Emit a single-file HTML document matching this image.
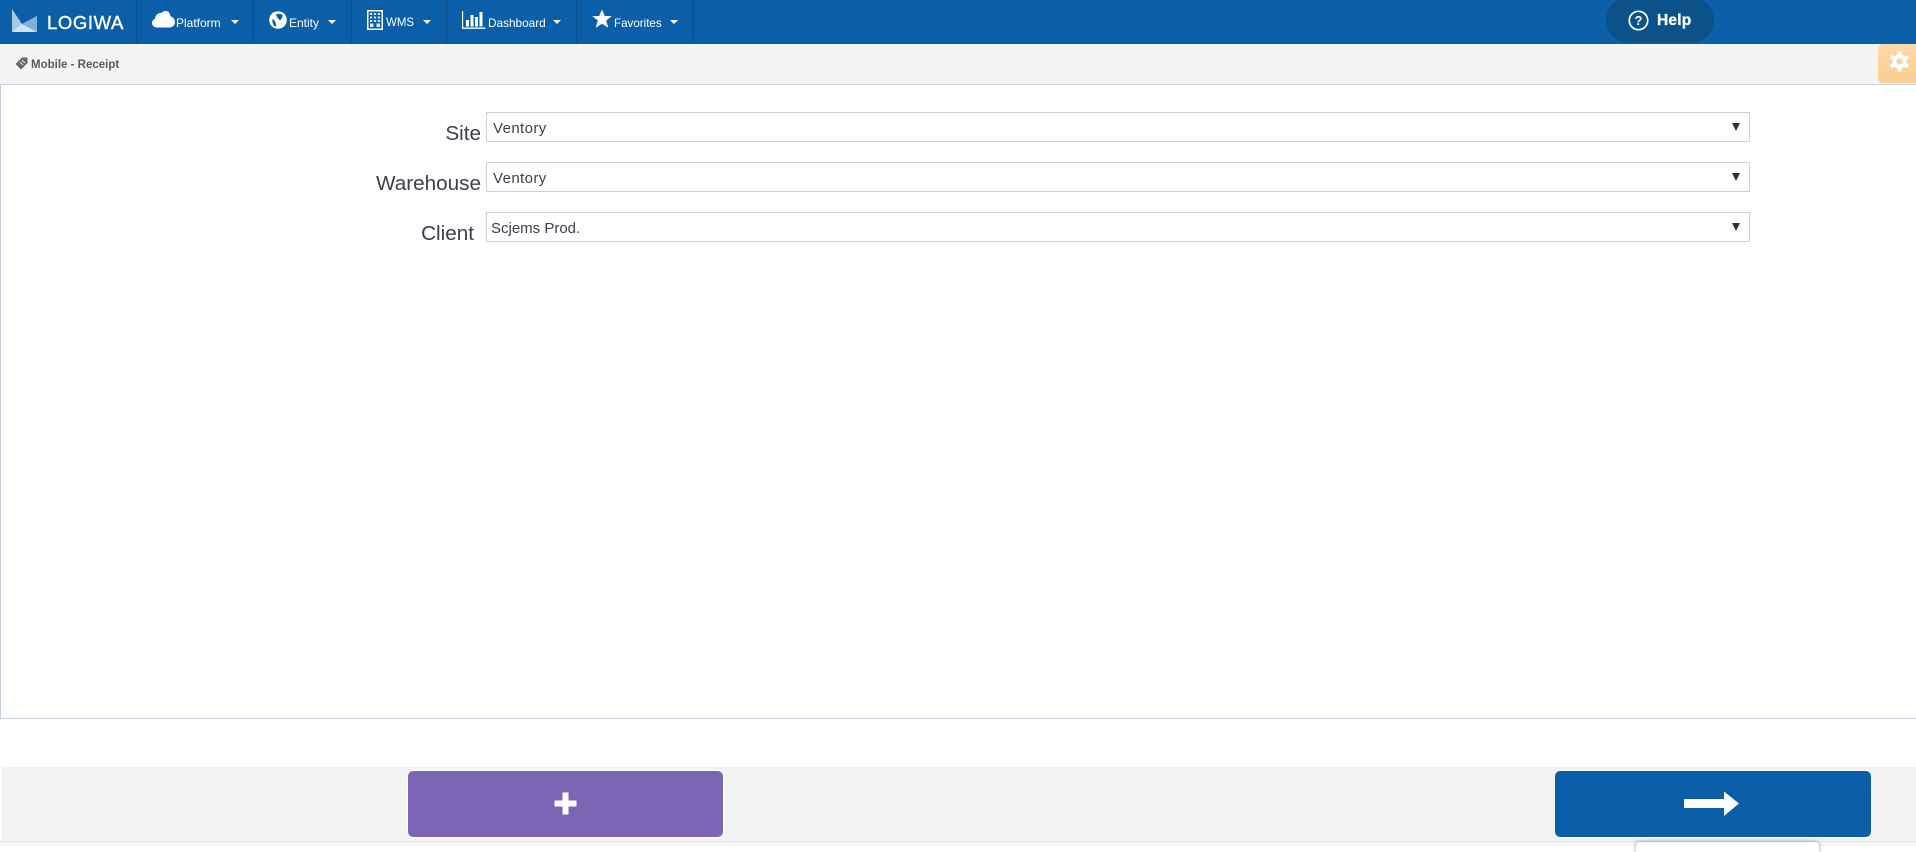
<!DOCTYPE html>
<html>
<head>
<meta charset="utf-8">
<title>Mobile - Receipt</title>
<style>
html,body{margin:0;padding:0;width:1916px;height:846px;overflow:hidden;background:#fff;font-family:"Liberation Sans",sans-serif;}
.abs,.abs *{box-sizing:border-box}
.abs{position:absolute}
#hdr{left:0;top:0;width:1916px;height:44px;background:#0b5fa8}
.div{top:0;width:1px;height:44px;background:#0a4f8a}
.nav{top:15px;font-size:12px;line-height:17px;color:#fff;white-space:nowrap}
.car{top:20px;width:0;height:0;border-left:4.5px solid transparent;border-right:4.5px solid transparent;border-top:4.5px solid #fff}
.lbl{font-size:20.7px;line-height:24px;color:#3b3f4e;white-space:nowrap;text-align:right}
.sel{left:486px;width:1264px;height:30px;border:1px solid #d0d0d0;background:#fff}
.val{font-size:15px;line-height:18px;color:#3a3f4c;white-space:nowrap}
.tri{left:1732px;width:0;height:0;border-left:4.5px solid transparent;border-right:4.5px solid transparent;border-top:8.5px solid #333}
</style>
</head>
<body>
<div class="abs" id="hdr"></div>
<svg class="abs" style="left:12px;top:9px" width="26" height="24" viewBox="0 0 26 24">
<path d="M0 0L10 15L25 7V23H0Z" fill="#a9cae6"/>
<path d="M0 23L10 15L25 23Z" fill="#cfe2f1"/>
<path d="M10 15L25 7V23Z" fill="#7fb0d9"/>
</svg>
<div class="abs" style="left:47px;top:12px;font-size:18.5px;line-height:22px;color:#fff;letter-spacing:.6px;-webkit-text-stroke:.4px #fff">LOGIWA</div>

<div class="abs div" style="left:136px"></div>
<div class="abs div" style="left:253px"></div>
<div class="abs div" style="left:351px"></div>
<div class="abs div" style="left:446px"></div>
<div class="abs div" style="left:576px"></div>
<div class="abs div" style="left:693px"></div>

<svg class="abs" style="left:152px;top:11px" width="23" height="17" viewBox="0 0 23 17"><path d="M5 16.500C2 16.500 0 14.500 0 12C0 10 1.200 8.300 3 7.700C3.200 4.500 6 1.800 9.500 1.800C11 0.700 12.500 0 13.800 0C16.500 0 18 2 18.300 5.200C20.800 5.700 23 8 23 11C23 14.300 20.500 16.500 17.500 16.500Z" fill="#fff"/></svg>
<div class="abs nav" style="left:176px">Platform</div>
<div class="abs car" style="left:231px"></div>

<svg class="abs" style="left:269px;top:11px" width="18" height="18" viewBox="0 0 18 18"><circle cx="9" cy="9" r="8.800" fill="#fff"/><path d="M7 3.500C9 2.500 12 2.800 13.500 4C13.800 6 12.500 8 11 9.500C9.500 8 7.500 6 7 3.500ZM3.500 8C5 8.500 6.500 10.500 7 13C7.500 14.500 7 15.500 6 15.500C4 14 3 11 3.500 8Z" fill="#0b5fa8"/></svg>
<div class="abs nav" style="left:289px">Entity</div>
<div class="abs car" style="left:328px"></div>

<svg class="abs" style="left:367px;top:10px" width="16" height="20" viewBox="0 0 16 20"><path d="M0 0H16V20H0Z" fill="#fff"/><rect x="1.500" y="1.500" width="13" height="17" fill="#0b5fa8"/><g fill="#dbe8f3"><rect x="3" y="3" width="2.200" height="2"/><rect x="6.900" y="3" width="2.200" height="2"/><rect x="10.800" y="3" width="2.200" height="2"/><rect x="3" y="6.500" width="2.200" height="2"/><rect x="6.900" y="6.500" width="2.200" height="2"/><rect x="10.800" y="6.500" width="2.200" height="2"/><rect x="3" y="10" width="2.200" height="2"/><rect x="6.900" y="10" width="2.200" height="2"/><rect x="10.800" y="10" width="2.200" height="2"/><rect x="3" y="13.500" width="3.500" height="3.500"/><rect x="9.500" y="13.500" width="3.500" height="3.500"/></g></svg>
<div class="abs nav" style="left:386px;font-size:11.500px">WMS</div>
<div class="abs car" style="left:423px"></div>

<svg class="abs" style="left:462px;top:11px" width="24" height="18" viewBox="0 0 24 18"><path d="M0.500 0V17.200H23.500" fill="none" stroke="#fff" stroke-width="1.300"/><g fill="#fff"><rect x="4" y="9" width="3" height="6.500"/><rect x="8.500" y="4" width="3" height="11.500"/><rect x="13" y="6" width="3" height="9.500"/><rect x="17.500" y="1" width="3" height="14.500"/></g></svg>
<div class="abs nav" style="left:488px;font-size:11.800px">Dashboard</div>
<div class="abs car" style="left:553px"></div>

<svg class="abs" style="left:592px;top:9px" width="20" height="20" viewBox="0 0 20 20"><path d="M10 0.500L12.800 7H19.800L14.200 11.500L16.300 18.800L10 14.700L3.700 18.800L5.800 11.500L0.200 7H7.200Z" fill="#fff"/></svg>
<div class="abs nav" style="left:614px;font-size:11.600px">Favorites</div>
<div class="abs car" style="left:670px"></div>

<div class="abs" style="left:1606px;top:-3px;width:108px;height:46px;border-radius:23px;background:#0a5289"></div>
<svg class="abs" style="left:1628px;top:10px" width="21" height="21" viewBox="0 0 21 21"><circle cx="10.500" cy="10.500" r="9.200" fill="none" stroke="#fff" stroke-width="1.700"/><text x="10.500" y="15" text-anchor="middle" font-family="Liberation Sans" font-size="13" font-weight="bold" fill="#fff">?</text></svg>
<div class="abs" style="left:1657px;top:11px;font-size:15.5px;line-height:19px;font-weight:bold;color:#fff;letter-spacing:.2px;-webkit-text-stroke:.3px #fff">Help</div>

<div class="abs" style="left:0;top:44px;width:1916px;height:41px;background:#f4f4f4;border-bottom:1px solid #ccd2da"></div>
<svg class="abs" style="left:15px;top:57px" width="13" height="13" viewBox="0 0 13 13"><path d="M0.500 7L7 0.500H12.500L12.500 6L6 12.500Z" fill="#666"/><path d="M5 5L8 8M7 3L10 6" stroke="#f4f4f4" stroke-width="1"/></svg>
<div class="abs" style="left:31px;top:58px;font-size:11.500px;line-height:14px;font-weight:bold;color:#555a64">Mobile - Receipt</div>
<div class="abs" style="left:1878px;top:44px;width:38px;height:39px;border-radius:5px 0 0 5px;background:linear-gradient(#fcdaa8,#fbcd90)"></div>
<svg class="abs" style="left:1889px;top:51px" width="21" height="21" viewBox="0 0 21 21"><circle cx="10.500" cy="10.500" r="5.200" fill="none" stroke="#fff" stroke-width="4"/><g stroke="#fff" stroke-width="4"><path d="M10.500 0.500V4"/><path d="M10.500 17V20.500"/><path d="M1.800 5.500L4.800 7.200"/><path d="M16.200 13.800L19.200 15.500"/><path d="M1.800 15.500L4.800 13.800"/><path d="M16.200 7.200L19.200 5.500"/></g></svg>

<div class="abs" style="left:0;top:85px;width:1916px;height:634px;background:#fff;border-left:1px solid #c5d0e0;border-bottom:1px solid #c5d0e0"></div>

<div class="abs lbl" style="left:300px;width:181px;top:122px">Site</div>
<div class="abs lbl" style="left:300px;width:181px;top:172px">Warehouse</div>
<div class="abs lbl" style="left:300px;width:174px;top:222px">Client</div>

<div class="abs sel" style="top:112px"></div>
<div class="abs sel" style="top:162px"></div>
<div class="abs sel" style="top:212px"></div>
<div class="abs val" style="left:493px;top:119.500px;letter-spacing:.4px">Ventory</div>
<div class="abs val" style="left:493px;top:169.500px;letter-spacing:.4px">Ventory</div>
<div class="abs val" style="left:491px;top:219.500px">Scjems Prod.</div>
<div class="abs tri" style="top:123px"></div>
<div class="abs tri" style="top:173px"></div>
<div class="abs tri" style="top:223px"></div>

<div class="abs" style="left:0;top:841px;width:1916px;height:5px;background:#f7f7f7;border-top:1px solid #e4e4e4"></div>
<div class="abs" style="left:2px;top:767px;width:1914px;height:74px;background:#f3f3f3"></div>
<div class="abs" style="left:1636px;top:842px;width:183px;height:10px;background:#fff;border-radius:4px 4px 0 0;box-shadow:0 0 4px rgba(0,0,0,.45)"></div>

<div class="abs" style="left:407px;top:770px;width:317px;height:68px;background:#7d65b5;border:1px solid #fff;border-radius:6px"></div>
<svg class="abs" style="left:554px;top:792px" width="23" height="23" viewBox="0 0 23 23"><path d="M8.500 0.500H14.500V8.500H22.500V14.500H14.500V22.500H8.500V14.500H0.500V8.500H8.500Z" fill="#fff"/></svg>

<div class="abs" style="left:1554px;top:770px;width:318px;height:68px;background:#0b5fa8;border:1px solid #fff;border-radius:6px"></div>
<svg class="abs" style="left:1684px;top:791px" width="56" height="25" viewBox="0 0 56 25"><path d="M0 8H40V0.500L55 12.500L40 25V17H0Z" fill="#fff"/></svg>
</body>
</html>
